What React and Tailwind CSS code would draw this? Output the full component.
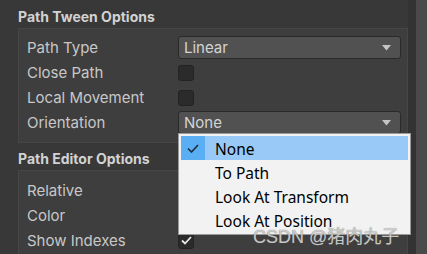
import { useState } from "react";

const sans = { fontFamily: "Inter, 'Noto Sans', sans-serif" };

function Dropdown({ value }) {
  return (
    <div className="flex h-[23px] flex-1 items-center justify-between rounded-[3px] border border-[#2a2a2a] bg-[#515151] pl-[5px] pr-[9px] text-[15px] text-[#d4d4d4]">
      <span className="pt-[1px]">{value}</span>
      <svg width="9" height="6" viewBox="0 0 9 6">
        <path d="M0 0 H9 L4.5 5.5 Z" fill="#c4c4c4" />
      </svg>
    </div>
  );
}

function Checkbox({ checked }) {
  return (
    <div className="flex h-[16px] w-[16px] items-center justify-center rounded-[3px] border border-[#232323] bg-[#2b2b2b]">
      {checked && (
        <svg width="11" height="9" viewBox="0 0 11 9">
          <path d="M1 4.5 L4 7.5 L10 1" fill="none" stroke="#e8e8e8" strokeWidth="1.8" />
        </svg>
      )}
    </div>
  );
}

function Row({ label, children }) {
  return (
    <div className="flex h-[25px] items-center">
      <div className="w-[151px] pt-[2px] text-[15px] text-[#c8c8c8]">{label}</div>
      <div className="flex flex-1 items-center">{children}</div>
    </div>
  );
}

const options = ["None", "To Path", "Look At Transform", "Look At Position"];

export default function App() {
  const [selected] = useState("None");

  return (
    <div className="relative flex h-[254px] w-[427px] overflow-hidden bg-[#383838]" style={sans}>
      {/* inspector column */}
      <div className="w-[408px] pl-[18px]">
        <div className="flex h-[28px] items-center pt-[4px] text-[14px] font-bold text-[#d2d2d2]">
          Path Tween Options
        </div>
        <div className="h-[115px] border border-[#464646] bg-[#3e3e3e] pb-[8px] pl-[8px] pr-[6px] pt-[6px]">
          <Row label="Path Type">
            <Dropdown value="Linear" />
          </Row>
          <Row label="Close Path">
            <Checkbox />
          </Row>
          <Row label="Local Movement">
            <Checkbox />
          </Row>
          <Row label="Orientation">
            <Dropdown value={selected} />
          </Row>
        </div>
        <div className="flex h-[27px] items-center pt-[3px] text-[14px] font-bold text-[#d2d2d2]">
          Path Editor Options
        </div>
        <div className="h-[100px] border border-[#464646] bg-[#3e3e3e] pl-[8px] pr-[6px] pt-[7px]">
          <Row label="Relative">
            <Checkbox />
          </Row>
          <Row label="Color">
            <Checkbox />
          </Row>
          <Row label="Show Indexes">
            <Checkbox checked />
          </Row>
        </div>
      </div>

      {/* scrollbar strip */}
      <div className="w-[8px] bg-[#333333]" />
      <div className="flex-1 bg-[#4a4a4a]" />

      {/* dropdown popup */}
      <div
        className="absolute left-[178px] top-[133px] w-[233px] border border-[#9a9a9a] bg-[#f2f2f2] p-[2px] text-[15.5px] text-black"
        style={{ fontFamily: "'Noto Sans', 'Open Sans', sans-serif" }}
      >
        {options.map((opt) => {
          const on = opt === selected;
          return (
            <div key={opt} className={`flex h-[24px] items-center ${on ? "bg-[#99c9f6]" : ""}`}>
              <div className={`flex h-full w-[24px] items-center justify-center ${on ? "bg-[#5aaef4]" : ""}`}>
                {on && (
                  <svg width="12" height="9" viewBox="0 0 12 9">
                    <path d="M1 4.5 L4.5 8 L11 1" fill="none" stroke="#1c2a38" strokeWidth="1.6" />
                  </svg>
                )}
              </div>
              <span className="pl-[10px] pt-[3px] leading-none">{opt}</span>
            </div>
          );
        })}
      </div>

      {/* watermark */}
      <div
        className="absolute left-[253px] top-[224px] text-[18px] text-[#e6e6e6]/80"
        style={{ fontFamily: "'Liberation Sans', 'Noto Sans CJK SC', sans-serif", textShadow: "0 0 1px #555" }}
      >
        CSDN @猪肉丸子
      </div>
    </div>
  );
}
